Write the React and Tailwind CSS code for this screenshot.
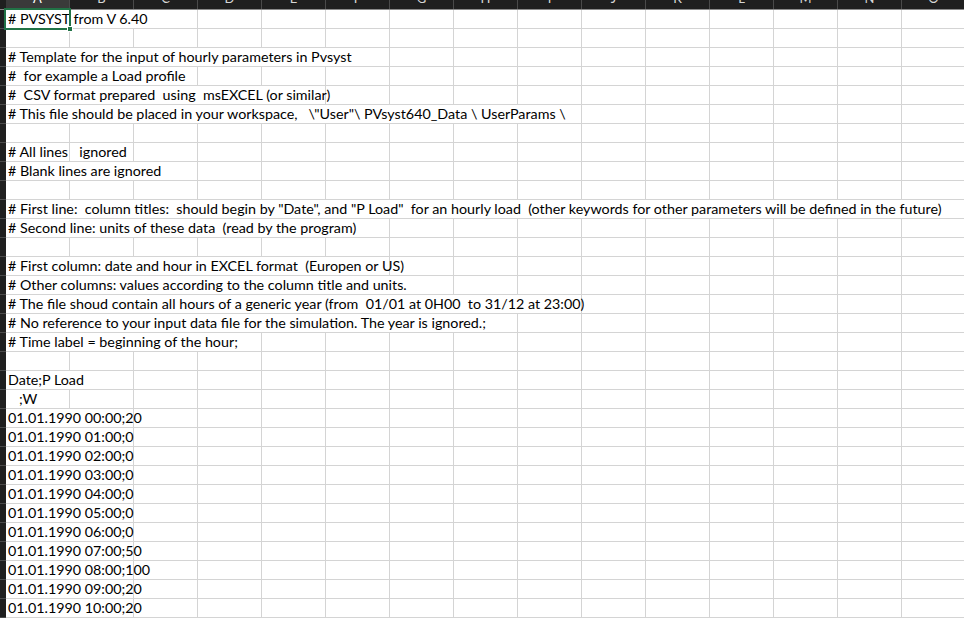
const COLS = ["A", "B", "C", "D", "E", "F", "G", "H", "I", "J", "K", "L", "M", "N", "O"];

// each row: list of cells { t: text, span: how many columns the text runs over }
const ROWS = [
  [{ t: "# PVSYST from V 6.40", span: 3 }],
  [],
  [{ t: "# Template for the input of hourly parameters in Pvsyst", span: 6 }],
  [{ t: "#  for example a Load profile", span: 3 }],
  [{ t: "#  CSV format prepared  using  msEXCEL (or similar)", span: 5 }],
  [{ t: '# This file should be placed in your workspace,   \\"User"\\ PVsyst640_Data \\ UserParams \\', span: 9 }],
  [],
  [{ t: "# All lines", span: 1 }, { t: "  ignored", span: 1 }],
  [{ t: "# Blank lines are ignored", span: 3 }],
  [],
  [
    {
      t: '# First line:  column titles:  should begin by "Date", and "P Load"  for an hourly load  (other keywords for other parameters will be defined in the future)',
      span: 15,
    },
  ],
  [{ t: "# Second line: units of these data  (read by the program)", span: 6 }],
  [],
  [{ t: "# First column: date and hour in EXCEL format  (Europen or US)", span: 6 }],
  [{ t: "# Other columns: values according to the column title and units.", span: 7 }],
  [{ t: "# The file shoud contain all hours of a generic year (from  01/01 at 0H00  to 31/12 at 23:00)", span: 9 }],
  [{ t: "# No reference to your input data file for the simulation. The year is ignored.;", span: 8 }],
  [{ t: "# Time label = beginning of the hour;", span: 4 }],
  [],
  [{ t: "Date;P Load", span: 2 }],
  [{ t: "   ;W", span: 1 }],
  [{ t: "01.01.1990 00:00;20", span: 2 }],
  [{ t: "01.01.1990 01:00;0", span: 2 }],
  [{ t: "01.01.1990 02:00;0", span: 2 }],
  [{ t: "01.01.1990 03:00;0", span: 2 }],
  [{ t: "01.01.1990 04:00;0", span: 2 }],
  [{ t: "01.01.1990 05:00;0", span: 2 }],
  [{ t: "01.01.1990 06:00;0", span: 2 }],
  [{ t: "01.01.1990 07:00;50", span: 2 }],
  [{ t: "01.01.1990 08:00;100", span: 2 }],
  [{ t: "01.01.1990 09:00;20", span: 2 }],
  [{ t: "01.01.1990 10:00;20", span: 2 }],
];

function Row({ cells }) {
  const used = cells.reduce((n, c) => n + c.span, 0);
  const rest = Array.from({ length: Math.max(0, COLS.length - used) });
  return (
    <div className="flex h-[19px] shrink-0">
      <div className="w-[6px] shrink-0 bg-[#1f1f1f] border-b border-[#4a4a4a]" />
      {cells.map((c, i) => (
        <div
          key={i}
          className="shrink-0 border-r border-b border-[#d4d4d4] pl-[2px] whitespace-pre leading-[18px] text-black"
          style={{ width: c.span * 64 }}
        >
          {c.t}
        </div>
      ))}
      {rest.map((_, i) => (
        <div key={"e" + i} className="w-16 shrink-0 border-r border-b border-[#d4d4d4]" />
      ))}
    </div>
  );
}

export default function App() {
  return (
    <div
      className="relative w-[964px] h-[618px] overflow-hidden bg-white text-[14.3px]"
      style={{ fontFamily: "Lato, 'Noto Sans', sans-serif" }}
    >
      {/* column headers, scrolled so only the bottom of the letters shows */}
      <div className="flex h-[10px] bg-[#1f1f1f] border-b border-[#8a8a8a]">
        <div className="w-[6px] shrink-0" />
        {COLS.map((c, i) => (
          <div
            key={c}
            className={
              "w-16 shrink-0 h-[9px] overflow-hidden border-r border-[#4a4a4a] flex justify-center " +
              (i === 0 ? "bg-[#3a3a3a] text-white" : "text-[#d6d6d6]")
            }
          >
            <span className="leading-[18px] -mt-[11px] text-[13px]">{c}</span>
          </div>
        ))}
      </div>

      {ROWS.map((cells, i) => (
        <Row key={i} cells={cells} />
      ))}

      {/* active cell A1 */}
      <div className="absolute left-[4px] top-[8px] w-[67px] h-[22px] border-2 border-[#217346] pointer-events-none" />
      <div className="absolute left-[67px] top-[26px] w-[6px] h-[6px] bg-[#217346] border border-white" />
    </div>
  );
}
